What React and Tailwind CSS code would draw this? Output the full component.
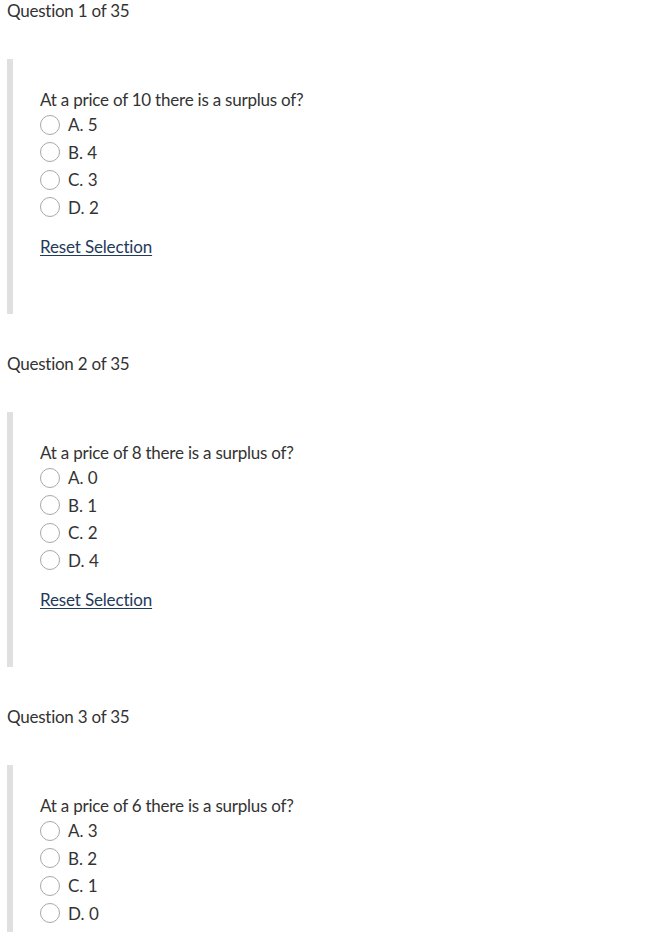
const QUESTIONS = [
  { num: 1, text: "At a price of 10 there is a surplus of?", options: ["A. 5", "B. 4", "C. 3", "D. 2"] },
  { num: 2, text: "At a price of 8 there is a surplus of?", options: ["A. 0", "B. 1", "C. 2", "D. 4"] },
  { num: 3, text: "At a price of 6 there is a surplus of?", options: ["A. 3", "B. 2", "C. 1", "D. 0"] },
];

function Question({ q }) {
  return (
    <section className="mb-[39px]">
      <h2 className="text-[17px] leading-[22px] text-[#333333] tracking-[-0.25px]">
        Question {q.num} of 35
      </h2>
      <div className="mt-[37px] border-l-[6px] border-[#e0e0e0] pl-[27px] pt-[30px] pb-[55px]">
        <p className="text-[17px] leading-[22px] text-[#333333] tracking-[-0.22px]">{q.text}</p>
        <div className="flex flex-col">
          {q.options.map((opt) => (
            <label key={opt} className="flex items-center gap-[8px] h-[27.5px]">
              <span className="w-[20px] h-[20px] rounded-full border border-[#a8a8a8] bg-white" />
              <span className="text-[17px] text-[#333333]">{opt}</span>
            </label>
          ))}
        </div>
        <a href="#" className="inline-block mt-[15px] text-[17px] leading-[22px] text-[#1f3a5a] tracking-[-0.15px] underline underline-offset-2">
          Reset Selection
        </a>
      </div>
    </section>
  );
}

export default function App() {
  return (
    <div className="bg-white px-[7px] min-h-screen" style={{ fontFamily: "Lato, 'Open Sans', sans-serif" }}>
      {QUESTIONS.map((q) => (
        <Question key={q.num} q={q} />
      ))}
    </div>
  );
}
